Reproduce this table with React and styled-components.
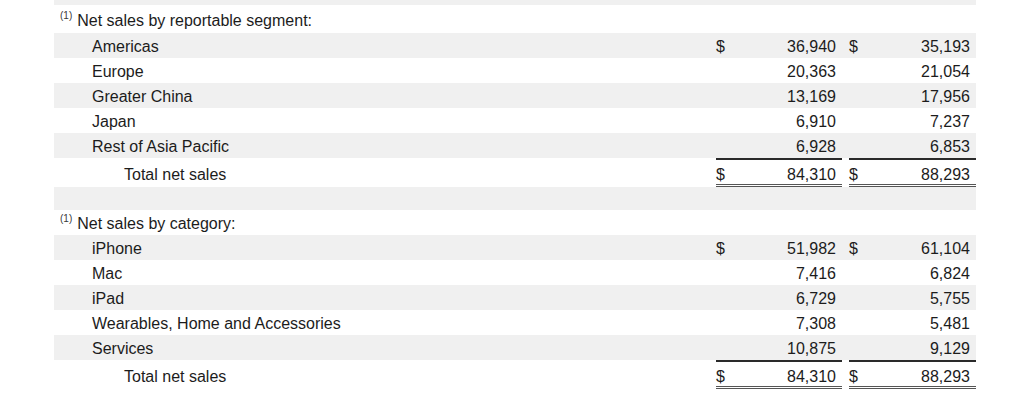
import styled, { createGlobalStyle } from "styled-components"

const GlobalStyle = createGlobalStyle`
body {
    margin: 0;
    background: #fff;
    font-family: "Liberation Sans", Arial, sans-serif;
    color: #1c1c1c;
}
`

const sections = [
    {
        title: "Net sales by reportable segment:",
        rows: [
            ["Americas", "36,940", "35,193"],
            ["Europe", "20,363", "21,054"],
            ["Greater China", "13,169", "17,956"],
            ["Japan", "6,910", "7,237"],
            ["Rest of Asia Pacific", "6,928", "6,853"],
        ],
        total: ["84,310", "88,293"],
    },
    {
        title: "Net sales by category:",
        rows: [
            ["iPhone", "51,982", "61,104"],
            ["Mac", "7,416", "6,824"],
            ["iPad", "6,729", "5,755"],
            ["Wearables, Home and Accessories", "7,308", "5,481"],
            ["Services", "10,875", "9,129"],
        ],
        total: ["84,310", "88,293"],
    },
]

const App = () => {
    return (
        <>
            <GlobalStyle />
            <Table>
                <Band $height={5} />
                {sections.map((section, s) => (
                    <div key={section.title}>
                        {s > 0 && <Band $height={23} />}
                        <HeaderRow $height={s === 0 ? 28 : 25} $pad={s === 0 ? 3 : 2}>
                            <Note>(1)</Note>
                            {section.title}
                        </HeaderRow>
                        {section.rows.map((row, i) => (
                            <Row key={row[0]} $shade={i % 2 === 0}>
                                <Label $indent={38}>{row[0]}</Label>
                                <Value>
                                    <span>{i === 0 ? "$" : ""}</span>
                                    <span>{row[1]}</span>
                                </Value>
                                <span />
                                <Value>
                                    <span>{i === 0 ? "$" : ""}</span>
                                    <span>{row[2]}</span>
                                </Value>
                            </Row>
                        ))}
                        <TotalRow>
                            <TotalLabel>Total net sales</TotalLabel>
                            <TotalValue>
                                <span>$</span>
                                <span>{section.total[0]}</span>
                            </TotalValue>
                            <span />
                            <TotalValue>
                                <span>$</span>
                                <span>{section.total[1]}</span>
                            </TotalValue>
                        </TotalRow>
                    </div>
                ))}
            </Table>
        </>
    )
}

const Table = styled.div`
width: 922px;
margin-left: 54px;
font-size: 16px;
`

const Band = styled.div`
height: ${(p) => p.$height}px;
background: #f0f0f0;
`

const HeaderRow = styled.div`
height: ${(p) => p.$height}px;
box-sizing: border-box;
display: flex;
align-items: flex-end;
padding: 0 0 ${(p) => p.$pad}px 6px;
line-height: 18px;
`

const Note = styled.span`
font-size: 10px;
color: #3a3a3a;
margin-right: 5px;
position: relative;
top: -5px;
`

const Row = styled.div`
display: grid;
grid-template-columns: 662px 126px 7px 127px;
height: 25px;
box-sizing: border-box;
padding-top: 3px;
line-height: 22px;
background: ${(p) => (p.$shade ? "#f0f0f0" : "#fff")};
`

const TotalRow = styled.div`
display: grid;
grid-template-columns: 662px 126px 7px 127px;
height: 29px;
line-height: 18px;
`

const Label = styled.div`
padding-left: ${(p) => p.$indent}px;
white-space: nowrap;
`

const TotalLabel = styled.div`
padding: 8px 0 0 70px;
white-space: nowrap;
`

const Value = styled.div`
display: flex;
justify-content: space-between;
padding-right: 6px;
box-sizing: border-box;
`

const TotalValue = styled(Value)`
padding-top: 6px;
border-top: 2px solid #2a2a2a;
border-bottom: 3px double #555;
`

export default App
